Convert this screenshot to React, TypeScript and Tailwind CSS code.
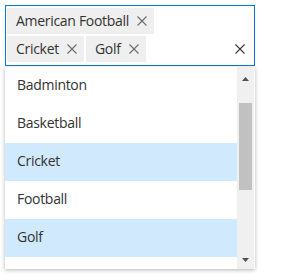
import React from 'react';

const selected = ['American Football', 'Cricket', 'Golf'];
const options = ['Badminton', 'Basketball', 'Cricket', 'Football', 'Golf'];

function Cross({ color }: { color: string }) {
  return (
    <svg width="10" height="10" viewBox="0 0 10 10" className="shrink-0">
      <path d="M0.5 0.5L9.5 9.5M9.5 0.5L0.5 9.5" stroke={color} strokeWidth="1.1" fill="none" />
    </svg>
  );
}

function Chip({ label }: { label: string }) {
  return (
    <span className="flex h-[26px] items-center gap-[8px] bg-[#efefef] pl-[9px] pr-[7px] text-[#333]">
      <span className="leading-none">{label}</span>
      <Cross color="#6b6b6b" />
    </span>
  );
}

export default function App() {
  return (
    <div className="bg-white p-[5px] text-[14px] tracking-[-0.3px] font-['Segoe_UI','Open_Sans',sans-serif]">
      <div className="relative h-[61px] w-[250px] border border-[#0078d6] bg-white">
        <div className="flex flex-wrap gap-x-[2px] gap-y-[2px] pl-[1px] pr-[30px] pt-[2px]">
          {selected.map((s) => (
            <Chip key={s} label={s} />
          ))}
        </div>
        <span className="absolute right-[9px] top-[38px]">
          <Cross color="#3a3a3a" />
        </span>
      </div>

      <div className="mt-[1px] flex h-[202px] w-[250px] overflow-hidden bg-white shadow-[0_1px_4px_rgba(0,0,0,0.3)]">
        <ul className="flex-1 overflow-hidden">
          {options.map((o) => (
            <li
              key={o}
              className={
                selected.includes(o)
                  ? 'flex h-[38px] items-center bg-[#d1e9fc] pb-[3px] pl-[12px] text-[#333]'
                  : 'flex h-[38px] items-center pb-[3px] pl-[12px] text-[#333]'
              }
            >
              {o}
            </li>
          ))}
        </ul>
        <div className="mr-[1px] flex w-[17px] flex-col bg-[#f0f0f0]">
          <div className="flex h-[17px] justify-center pt-[10px]">
            <svg width="7" height="4" viewBox="0 0 7 4">
              <path d="M3.5 0L7 4H0Z" fill="#505050" />
            </svg>
          </div>
          <div className="flex-1 px-[2px] pt-[19px]">
            <div className="h-[87px] w-full bg-[#c1c1c1]" />
          </div>
          <div className="flex h-[17px] justify-center pt-[6px]">
            <svg width="7" height="4" viewBox="0 0 7 4">
              <path d="M0 0H7L3.5 4Z" fill="#505050" />
            </svg>
          </div>
        </div>
      </div>
    </div>
  );
}
